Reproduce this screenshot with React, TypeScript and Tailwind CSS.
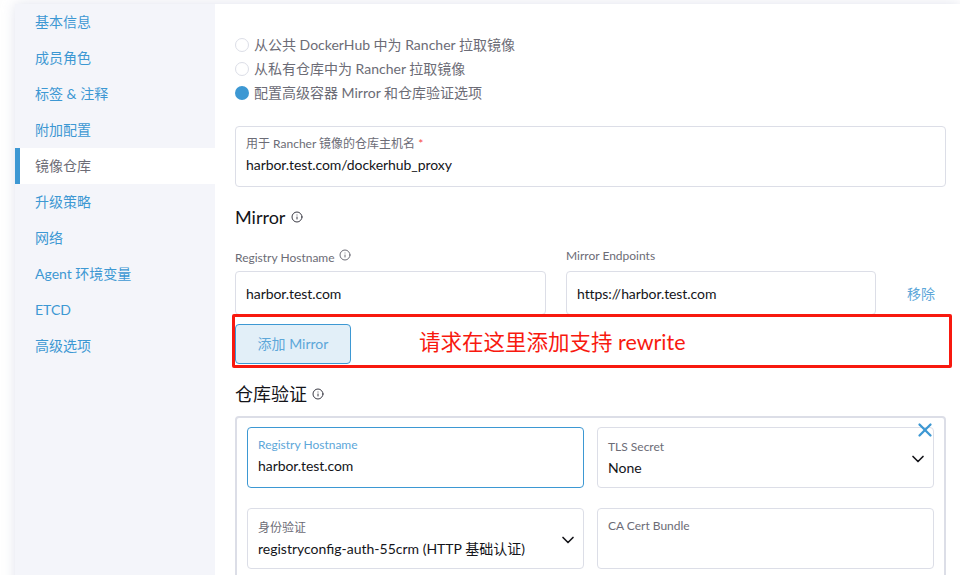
import { ChevronDown, Info, X } from "lucide-react"

const navItems = ["基本信息", "成员角色", "标签 & 注释", "附加配置", "镜像仓库", "升级策略", "网络", "Agent 环境变量", "ETCD", "高级选项"]

function Sidebar() {
    return (
        <nav className="w-[200px] shrink-0 bg-[#f4f5fa] text-[14px]">
            {navItems.map((item) => {
                const active = item === "镜像仓库"
                return (
                    <div
                        key={item}
                        className={`h-9 flex items-center pb-[2px] ${active ? "bg-white text-[#6c6c76] border-l-[5px] border-[#3d98d3] pl-[15px]" : "pl-5 text-[#3d98d3]"}`}
                    >
                        {item}
                    </div>
                )
            })}
        </nav>
    )
}

function Radio({ label, checked = false }: { label: string; checked?: boolean }) {
    return (
        <div className="h-6 flex items-center gap-[5px] text-[14px] text-[#6c6c76]">
            <span className={`w-[14px] h-[14px] rounded-full ${checked ? "bg-[#3d98d3]" : "bg-white border border-[#dcdee7]"}`} />
            <span className="-mt-[2px]">{label}</span>
        </div>
    )
}

function Field({ label, value, focused = false, select = false, required = false, className = "" }: {
    label: string
    value?: string
    focused?: boolean
    select?: boolean
    required?: boolean
    className?: string
}) {
    return (
        <div className={`relative h-[61px] rounded border px-[10px] ${select ? "pt-[11px]" : "pt-[9px]"} ${focused ? "border-[#3d98d3]" : "border-[#dcdee7]"} ${className}`}>
            <div className={`text-[12px] leading-[16px] ${focused ? "text-[#5da7d9]" : "text-[#6c6c76]"}`}>
                {label}
                {required && <span className="text-[#f64747]"> *</span>}
            </div>
            {value && <div className={`mt-[3px] text-[14px] leading-[20px] text-[#141419] ${select ? "" : "tracking-[-0.07px]"}`}>{value}</div>}
            {select && <ChevronDown className="absolute right-[5px] top-[21px] w-[20px] h-[20px] text-[#141419]" strokeWidth={2} />}
        </div>
    )
}

function PlainInput({ value }: { value: string }) {
    return (
        <div className="h-[44px] rounded border border-[#dcdee7] px-[10px] flex items-center text-[14px] tracking-[-0.07px] text-[#141419]">
            {value}
        </div>
    )
}

export default function App() {
    return (
        <div
            className="w-[960px] h-[575px] overflow-hidden bg-white pl-[15px] pt-[4px]"
            style={{ fontFamily: 'Lato, "Noto Sans CJK SC", sans-serif' }}
        >
            <div className="flex h-[640px] bg-white shadow-[0_0_12px_rgba(200,204,222,0.55)]">
                <Sidebar />
                <main className="flex-1 pl-5 pr-[14px] pt-[29px]">
                    <Radio label="从公共 DockerHub 中为 Rancher 拉取镜像" />
                    <Radio label="从私有仓库中为 Rancher 拉取镜像" />
                    <Radio label="配置高级容器 Mirror 和仓库验证选项" checked />

                    <Field label="用于 Rancher 镜像的仓库主机名" value="harbor.test.com/dockerhub_proxy" required className="mt-[21px]" />

                    <h3 className="mt-[18px] h-[24px] flex items-center gap-[6px] text-[18px] text-[#141419]">
                        Mirror
                        <Info className="w-[12px] h-[12px] text-[#3a3a44]" />
                    </h3>

                    <div className="mt-[17px] flex">
                        <div className="w-[311px]">
                            <div className="h-[22px] flex items-center gap-[4px] pt-[1px] text-[12px] text-[#6c6c76]">
                                Registry Hostname
                                <Info className="w-[12px] h-[12px] -mt-[5px]" />
                            </div>
                            <div className="mt-[3px]">
                                <PlainInput value="harbor.test.com" />
                            </div>
                        </div>
                        <div className="ml-[20px] w-[310px]">
                            <div className="h-[20px] flex items-center text-[12px] text-[#6c6c76]">Mirror Endpoints</div>
                            <div className="mt-[5px]">
                                <PlainInput value="https://harbor.test.com" />
                            </div>
                        </div>
                        <div className="ml-[31px] mt-[37px] text-[14px] text-[#5da7d9]">移除</div>
                    </div>

                    <div className="relative -ml-[3px] -mr-[6px] -mt-[1px] h-[54px] rounded-[2px] border-[3px] border-[#f8190f] bg-white flex items-center">
                        <button className="w-[116px] h-[40px] mt-[5px] rounded border border-[#3d98d3] bg-[#e2eff8] text-[14px] text-[#5da7d9]">
                            添加 Mirror
                        </button>
                        <span className="ml-[68px] mt-[2px] text-[21.5px] text-[#f8190f]">请求在这里添加支持 rewrite</span>
                    </div>

                    <h3 className="mt-[14px] h-[24px] flex items-center gap-[5px] text-[18px] text-[#141419]">
                        仓库验证
                        <Info className="w-[12px] h-[12px] text-[#3a3a44]" />
                    </h3>

                    <div className="relative mt-[10px] rounded border-2 border-[#dcdee7] px-[10px] pt-[9px]">
                        <X className="absolute z-10 right-[8px] top-[1px] w-[22px] h-[22px] text-[#3d98d3]" strokeWidth={2.5} />
                        <div className="grid grid-cols-2 gap-x-[13px] gap-y-[20px]">
                            <Field label="Registry Hostname" value="harbor.test.com" focused />
                            <Field label="TLS Secret" value="None" select />
                            <Field label="身份验证" value="registryconfig-auth-55crm (HTTP 基础认证)" select />
                            <Field label="CA Cert Bundle" />
                        </div>
                        <div className="h-[20px]" />
                    </div>
                </main>
            </div>
        </div>
    )
}
